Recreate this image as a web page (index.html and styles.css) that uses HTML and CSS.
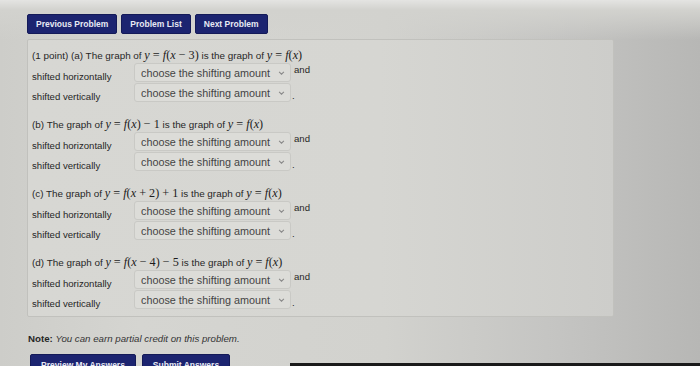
FILE: index.html
```html
<!DOCTYPE html>
<html>
<head>
<meta charset="utf-8">
<link rel="stylesheet" href="styles.css">
</head>
<body>
<div class="page">
  <div class="nav">
    <button class="btn">Previous Problem</button>
    <button class="btn">Problem List</button>
    <button class="btn">Next Problem</button>
  </div>

  <div class="problem">
    <div class="part">
      <div class="q">(1 point) (a) The graph of <span class="m"><i>y</i> = <i>f</i>(<i>x</i> − 3)</span> is the graph of <span class="m"><i>y</i> = <i>f</i>(<i>x</i>)</span></div>
      <div class="row"><span class="lab">shifted horizontally</span><span class="sel">choose the shifting amount<svg class="chev" viewBox="0 0 8 5"><path d="M1 1 L4 4 L7 1" /></svg></span><span class="after and">and</span></div>
      <div class="row"><span class="lab">shifted vertically</span><span class="sel">choose the shifting amount<svg class="chev" viewBox="0 0 8 5"><path d="M1 1 L4 4 L7 1" /></svg></span><span class="after dot">.</span></div>
    </div>
    <div class="part">
      <div class="q">(b) The graph of <span class="m"><i>y</i> = <i>f</i>(<i>x</i>) − 1</span> is the graph of <span class="m"><i>y</i> = <i>f</i>(<i>x</i>)</span></div>
      <div class="row"><span class="lab">shifted horizontally</span><span class="sel">choose the shifting amount<svg class="chev" viewBox="0 0 8 5"><path d="M1 1 L4 4 L7 1" /></svg></span><span class="after and">and</span></div>
      <div class="row"><span class="lab">shifted vertically</span><span class="sel">choose the shifting amount<svg class="chev" viewBox="0 0 8 5"><path d="M1 1 L4 4 L7 1" /></svg></span><span class="after dot">.</span></div>
    </div>
    <div class="part">
      <div class="q">(c) The graph of <span class="m"><i>y</i> = <i>f</i>(<i>x</i> + 2) + 1</span> is the graph of <span class="m"><i>y</i> = <i>f</i>(<i>x</i>)</span></div>
      <div class="row"><span class="lab">shifted horizontally</span><span class="sel">choose the shifting amount<svg class="chev" viewBox="0 0 8 5"><path d="M1 1 L4 4 L7 1" /></svg></span><span class="after and">and</span></div>
      <div class="row"><span class="lab">shifted vertically</span><span class="sel">choose the shifting amount<svg class="chev" viewBox="0 0 8 5"><path d="M1 1 L4 4 L7 1" /></svg></span><span class="after dot">.</span></div>
    </div>
    <div class="part last">
      <div class="q">(d) The graph of <span class="m"><i>y</i> = <i>f</i>(<i>x</i> − 4) − 5</span> is the graph of <span class="m"><i>y</i> = <i>f</i>(<i>x</i>)</span></div>
      <div class="row"><span class="lab">shifted horizontally</span><span class="sel">choose the shifting amount<svg class="chev" viewBox="0 0 8 5"><path d="M1 1 L4 4 L7 1" /></svg></span><span class="after and">and</span></div>
      <div class="row"><span class="lab">shifted vertically</span><span class="sel">choose the shifting amount<svg class="chev" viewBox="0 0 8 5"><path d="M1 1 L4 4 L7 1" /></svg></span><span class="after dot">.</span></div>
    </div>
  </div>

  <p class="note"><b>Note:</b> <i>You can earn partial credit on this problem.</i></p>

  <div class="actions">
    <button class="btn big">Preview My Answers</button>
    <button class="btn big">Submit Answers</button>
  </div>
</div>
</body>
</html>
```

FILE: styles.css
```css
html, body {
  margin: 0;
  padding: 0;
  height: 366px;
  overflow: hidden;
}
body {
  font-family: "Liberation Sans", Arial, sans-serif;
  color: #262626;
  background:
    linear-gradient(#1a1a1a, #1a1a1a) no-repeat right bottom / 410px 3px,
    linear-gradient(to bottom, #e4e4e2 0, #d2d2ce 10px, rgba(0,0,0,0) 40px),
    linear-gradient(to right, #cdcdc9 0, #d5d5d1 20%, #d2d2ce 55%, #c4c4c2 80%, #b7b7b5 100%);
}
.page {
  display: flex;
  flex-direction: column;
  align-items: flex-start;
  padding: 14px 0 0 27px;
}
.nav {
  display: flex;
  gap: 4px;
}
.btn {
  font-family: "Liberation Sans", Arial, sans-serif;
  font-size: 8.5px;
  font-weight: bold;
  color: #e8eaf4;
  background: #1c2470;
  border: 1px solid #141a58;
  border-radius: 2px;
  height: 20px;
  padding: 0 8px;
  margin: 0;
  line-height: 18px;
}
.problem {
  margin-top: 5px;
  width: 576px;
  padding: 8px 5px 6px 4px;
  background: linear-gradient(to right, #d7d7d3, #d6d6d2 60%, #cdcdca);
  border: 1px solid #c1c1bd;
  border-radius: 2px;
}
.part {
  margin-bottom: 14px;
}
.part.last {
  margin-bottom: 0;
}
.q {
  font-size: 9.9px;
  height: 14px;
  line-height: 14px;
  margin-bottom: 1px;
  white-space: nowrap;
}
.m {
  font-family: "Liberation Serif", "Times New Roman", serif;
  font-size: 12.2px;
  color: #1c1c1c;
}
.row {
  display: flex;
  align-items: flex-start;
  height: 20px;
}
.lab {
  width: 102px;
  font-size: 9.6px;
  padding-top: 8px;
  white-space: nowrap;
}
.sel {
  box-sizing: border-box;
  width: 157px;
  height: 19px;
  display: flex;
  align-items: center;
  padding: 0 5px 0 6px;
  font-size: 10.8px;
  color: #444;
  background: #dcdcd8;
  border: 1px solid #c9c9c5;
  border-radius: 3px;
  white-space: nowrap;
}
.chev {
  flex: none;
  width: 7px;
  height: 4px;
  margin-left: auto;
  fill: none;
  stroke: #8a8a8a;
  stroke-width: 1.3;
}
.after {
  font-size: 9.6px;
  margin-left: 3px;
}
.and {
  padding-top: 1px;
}
.dot {
  padding-top: 7px;
  margin-left: 1px;
}
.note {
  margin: 15px 0 0 1px;
  font-size: 9.7px;
  line-height: 14px;
}
.note i {
  color: #333;
}
.actions {
  display: flex;
  gap: 6px;
  margin: 8px 0 0 3px;
}
.btn.big {
  height: 22px;
  width: 106px;
}
.btn.big + .btn.big {
  width: 88px;
}
```
